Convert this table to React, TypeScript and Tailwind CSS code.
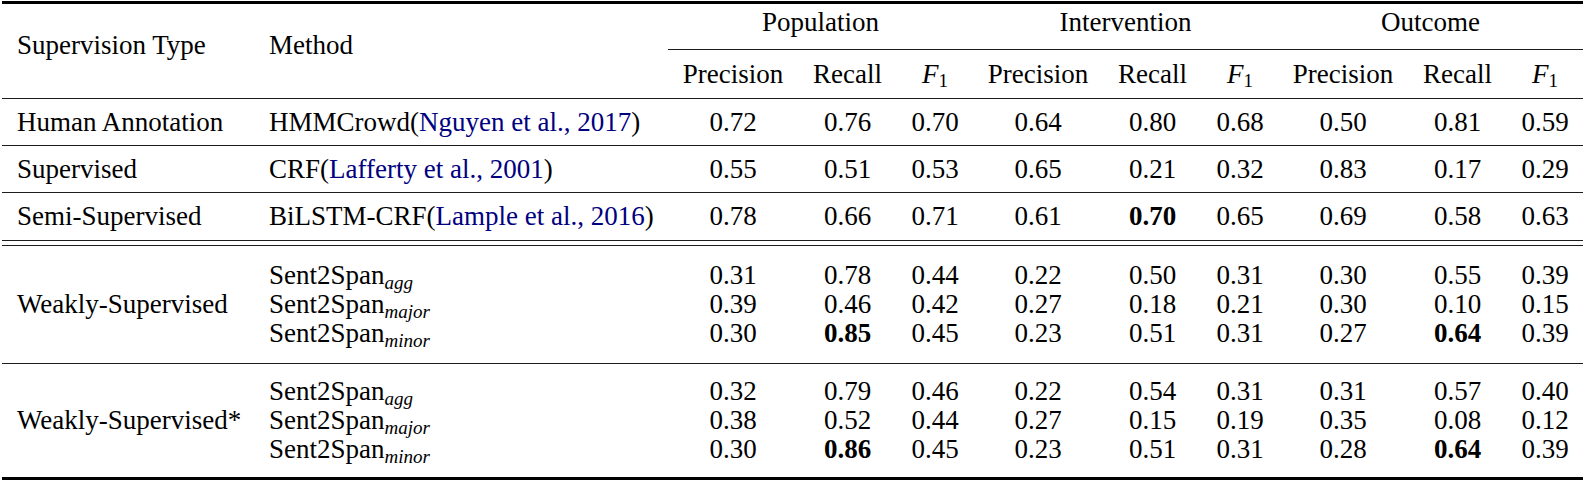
import React from "react";

const COLS =
  "grid grid-cols-[253px_413px_130px_99px_76px_130px_99px_76px_130px_99px_76px]";

const groups = ["Population", "Intervention", "Outcome"];

interface Row {
  type: string;
  method: string;
  cite: string;
  values: string[];
}

interface Block {
  type: string;
  variants: { sub: string; values: string[] }[];
}

// "*" in front of a value = bold (best in column)
const singleRows: Row[] = [
  {
    type: "Human Annotation",
    method: "HMMCrowd",
    cite: "Nguyen et al., 2017",
    values: ["0.72", "0.76", "0.70", "0.64", "0.80", "0.68", "0.50", "0.81", "0.59"],
  },
  {
    type: "Supervised",
    method: "CRF",
    cite: "Lafferty et al., 2001",
    values: ["0.55", "0.51", "0.53", "0.65", "0.21", "0.32", "0.83", "0.17", "0.29"],
  },
  {
    type: "Semi-Supervised",
    method: "BiLSTM-CRF",
    cite: "Lample et al., 2016",
    values: ["0.78", "0.66", "0.71", "0.61", "*0.70", "0.65", "0.69", "0.58", "0.63"],
  },
];

const blocks: Block[] = [
  {
    type: "Weakly-Supervised",
    variants: [
      { sub: "agg", values: ["0.31", "0.78", "0.44", "0.22", "0.50", "0.31", "0.30", "0.55", "0.39"] },
      { sub: "major", values: ["0.39", "0.46", "0.42", "0.27", "0.18", "0.21", "0.30", "0.10", "0.15"] },
      { sub: "minor", values: ["0.30", "*0.85", "0.45", "0.23", "0.51", "0.31", "0.27", "*0.64", "0.39"] },
    ],
  },
  {
    type: "Weakly-Supervised*",
    variants: [
      { sub: "agg", values: ["0.32", "0.79", "0.46", "0.22", "0.54", "0.31", "0.31", "0.57", "0.40"] },
      { sub: "major", values: ["0.38", "0.52", "0.44", "0.27", "0.15", "0.19", "0.35", "0.08", "0.12"] },
      { sub: "minor", values: ["0.30", "*0.86", "0.45", "0.23", "0.51", "0.31", "0.28", "*0.64", "0.39"] },
    ],
  },
];

const Num = ({ v }: { v: string }) =>
  v.startsWith("*") ? <span className="font-bold">{v.slice(1)}</span> : <span>{v}</span>;

const F1 = () => (
  <span className="italic">
    F<sub className="not-italic text-[19px]">1</sub>
  </span>
);

const ThinRule = () => <div className="h-px bg-[#1c1c1c]" />;

export default function App() {
  return (
    <div className="bg-white w-[1585px] h-[481px] pt-px pl-[2px] text-black font-['Liberation_Serif',serif] text-[27px] leading-[29px]">
      <div className="w-[1581px]">
        <div className="h-[3px] bg-black" />

        {/* header */}
        <div className={`${COLS} grid-rows-[45px_1px_48px]`}>
          <div className="row-span-3 pl-[15px] pt-[27px]">Supervision Type</div>
          <div className="row-span-3 pl-[14px] pt-[27px]">Method</div>
          {groups.map((g) => (
            <div key={g} className="col-span-3 text-center pt-[4px]">
              {g}
            </div>
          ))}
          <div className="col-span-9 bg-[#1c1c1c]" />
          {groups.map((g) => (
            <React.Fragment key={g}>
              <div className="flex items-center justify-center">Precision</div>
              <div className="flex items-center justify-center">Recall</div>
              <div className="flex items-center justify-center">
                <F1 />
              </div>
            </React.Fragment>
          ))}
        </div>
        <ThinRule />

        {/* fully / semi supervised baselines */}
        {singleRows.map((r, i) => (
          <React.Fragment key={r.type}>
            <div className={`${COLS} ${i === 2 ? "h-[47px]" : "h-[46px]"} items-center`}>
              <div className="pl-[15px]">{r.type}</div>
              <div className="pl-[14px] whitespace-nowrap">
                {r.method}(<span className="text-[#000080]">{r.cite}</span>)
              </div>
              {r.values.map((v, j) => (
                <div key={j} className="text-center">
                  <Num v={v} />
                </div>
              ))}
            </div>
            <ThinRule />
          </React.Fragment>
        ))}
        <div className="h-[4px]" />
        <ThinRule />

        {/* weak supervision */}
        {blocks.map((b, i) => (
          <React.Fragment key={b.type}>
            <div className={`${COLS} ${i === 0 ? "py-[15px]" : "py-[13px]"}`}>
              <div className="pl-[15px] flex items-center">{b.type}</div>
              <div className="pl-[14px] flex flex-col">
                {b.variants.map((v) => (
                  <div key={v.sub}>
                    Sent2Span<sub className="italic text-[19px]">{v.sub}</sub>
                  </div>
                ))}
              </div>
              {b.variants[0].values.map((_, j) => (
                <div key={j} className="flex flex-col items-center">
                  {b.variants.map((v) => (
                    <div key={v.sub}>
                      <Num v={v.values[j]} />
                    </div>
                  ))}
                </div>
              ))}
            </div>
            {i === 0 ? <ThinRule /> : <div className="h-[3px] bg-black" />}
          </React.Fragment>
        ))}
      </div>
    </div>
  );
}
